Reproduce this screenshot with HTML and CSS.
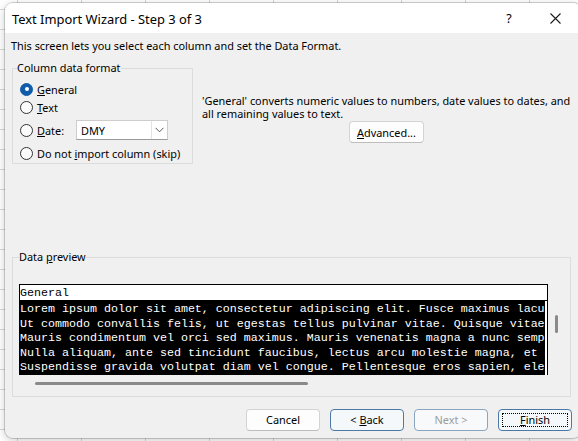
FILE: index.html
```html
<!DOCTYPE html>
<html>
<head>
<meta charset="utf-8">
<title>Text Import Wizard</title>
<link rel="stylesheet" href="styles.css">
</head>
<body>
<div class="dialog">
  <div class="titlebar">
    <span class="title">Text Import Wizard - Step 3 of 3</span>
    <span class="help">?</span>
    <span class="close"><svg width="11" height="11" viewBox="0 0 11 11"><path d="M0.5 0.5L10.5 10.5M10.5 0.5L0.5 10.5" stroke="#1b1b1b" stroke-width="1.1" fill="none"/></svg></span>
  </div>
  <div class="content">
    <p class="intro">This screen lets you select each column and set the Data Format.</p>
    <div class="top">
      <fieldset class="group fmt">
        <legend>Column data format</legend>
        <div class="opt"><span class="radio on"></span><span><u>G</u>eneral</span></div>
        <div class="opt"><span class="radio"></span><span><u>T</u>ext</span></div>
        <div class="opt date"><span class="radio"></span><span class="datelabel"><u>D</u>ate:</span>
          <span class="select"><span class="val">DMY</span><span class="chev"><svg width="9" height="6" viewBox="0 0 9 6"><path d="M0.5 0.8L4.5 4.8L8.5 0.8" stroke="#555" stroke-width="1" fill="none"/></svg></span></span>
        </div>
        <div class="opt"><span class="radio"></span><span>Do not <u>i</u>mport column (skip)</span></div>
      </fieldset>
      <div class="desc">
        <p>'General' converts numeric values to numbers, date values to dates, and<br>all remaining values to text.</p>
        <button class="btn adv"><u>A</u>dvanced...</button>
      </div>
    </div>
    <fieldset class="group preview">
      <legend>Data <u>p</u>review</legend>
      <div class="pv">
        <div class="grid">
          <div class="hdr">General</div>
          <div class="rows">
            <div class="row">Lorem ipsum dolor sit amet, consectetur adipiscing elit. Fusce maximus lacus</div>
            <div class="row">Ut commodo convallis felis, ut egestas tellus pulvinar vitae. Quisque vitae</div>
            <div class="row">Mauris condimentum vel orci sed maximus. Mauris venenatis magna a nunc semper</div>
            <div class="row">Nulla aliquam, ante sed tincidunt faucibus, lectus arcu molestie magna, et a</div>
            <div class="row">Suspendisse gravida volutpat diam vel congue. Pellentesque eros sapien, eleifend</div>
          </div>
        </div>
        <div class="vscroll"><span class="vthumb"></span></div>
      </div>
      <div class="hscroll"><span class="hthumb"></span></div>
    </fieldset>
    <div class="buttons">
      <button class="btn">Cancel</button>
      <button class="btn def">&lt; <u>B</u>ack</button>
      <button class="btn def disabled">Next &gt;</button>
      <button class="btn def focus"><span class="focusbox"><u>F</u>inish</span></button>
    </div>
  </div>
</div>
</body>
</html>
```

FILE: styles.css
```css
* { box-sizing: border-box; }
html, body { margin: 0; height: 100%; overflow: hidden; }
body {
  font-family: "Noto Sans", sans-serif;
  font-size: 10.9px;
  color: #000;
  background-color: #fff;
  background-image:
    linear-gradient(to right, #d9d9d9 1px, transparent 1px),
    linear-gradient(to bottom, #d9d9d9 1px, transparent 1px);
  background-size: 64px 20px;
  background-position: 17px 0, 0 9px;
  padding: 3px 0 0 5px;
}
.dialog {
  width: 576px;
  border-radius: 8px;
  overflow: hidden;
  background: #f0f0f0;
  box-shadow: 0 0 0 1px rgba(0,0,0,0.16), 0 2px 10px rgba(0,0,0,0.22);
}
.titlebar {
  height: 30px;
  background: #fff;
  display: flex;
  align-items: center;
  padding: 0 3px 0 7px;
}
.title { font-size: 12.9px; flex: 1; padding-top: 1px; }
.help { width: 46px; text-align: center; font-size: 12.5px; }
.close { width: 46px; display: flex; justify-content: center; align-items: center; }
.content { padding: 5px 10px 7px 7px; }
.intro { margin: 0 0 6px -1px; line-height: 16px; }
.top { display: flex; align-items: flex-start; }
.group {
  margin: 0;
  border: 1px solid #dcdcdc;
  min-width: 0;
}
.group legend { padding: 0; line-height: 16px; margin-left: 0; }
.fmt { width: 181px; flex: none; padding: 4px 4px 1px 4px; }
.opt { display: flex; align-items: center; height: 18px; white-space: nowrap; }
.opt.date { height: 28px; }
.radio {
  width: 13px; height: 13px;
  border: 1px solid #333;
  border-radius: 50%;
  background: #fbfbfb;
  margin: 0 4px 0 3px;
  flex: none;
  position: relative;
}
.radio.on { background: #0f5cab; border-color: #0f5cab; }
.radio.on::after {
  content: ""; position: absolute; left: 3.5px; top: 3.5px;
  width: 4px; height: 4px; border-radius: 50%; background: #fff;
}
.datelabel { width: 39px; }
.select {
  width: 92px; height: 20px;
  background: #fff;
  border: 1px solid #cdcdcd;
  border-bottom-color: #9a9a9a;
  display: flex; align-items: center;
}
.select .val { flex: 1; padding-left: 4px; }
.select .chev {
  width: 16px; height: 18px;
  border-left: 1px solid #e3e3e3;
  display: flex; align-items: center; justify-content: center;
}
.desc { flex: 1; margin-left: 9px; padding-top: 34px; }
.desc p { margin: 0; line-height: 13px; white-space: nowrap; }
.btn {
  font: inherit;
  color: #000;
  height: 22px;
  background: #fdfdfd;
  border: 1px solid #d3d3d3;
  border-bottom-color: #bdbdbd;
  border-radius: 4px;
  padding: 0;
}
.adv { display: block; width: 75px; margin: 1px auto 0; }
.preview { padding: 19px 4px 11px 6px; margin-top: 85px; }
.pv { display: flex; align-items: flex-start; }
.grid {
  width: 529px;
  border: 1px solid #000;
  border-bottom: none;
  font-family: "Liberation Mono", monospace;
  font-size: 11.67px;
  background: #fff;
}
.hdr {
  height: 16px;
  line-height: 15px;
  padding-top: 1px;
  border-bottom: 1px solid #000;
  white-space: pre;
  overflow: hidden;
}
.rows {
  background: #000;
  color: #fff;
  border-right: 2px solid #fff;
  overflow: hidden;
  padding-top: 1px;
}
.row { height: 14.5px; line-height: 14.5px; white-space: pre; }
.vscroll { margin-left: 7px; padding-top: 31px; }
.vthumb { display: block; width: 3px; height: 18px; background: #8a8a8a; border-radius: 1.5px; }
.hscroll { margin: 7px 0 0 16px; }
.hthumb { display: block; width: 273px; height: 3px; background: #8a8a8a; border-radius: 1.5px; }
.buttons { display: flex; justify-content: flex-end; gap: 10px; margin: 12px -1px 0 0; }
.buttons .btn { width: 74px; }
.btn.def { border-color: #4d7aa5; background: #f4f8fb; }
.btn.disabled { color: #9c9c9c; border-color: #8aa5bf; background: #f7f9fb; }
.btn.focus { padding: 3px; }
.focusbox {
  display: flex; align-items: center; justify-content: center;
  height: 100%;
  border: 1px dotted #000;
}
```
